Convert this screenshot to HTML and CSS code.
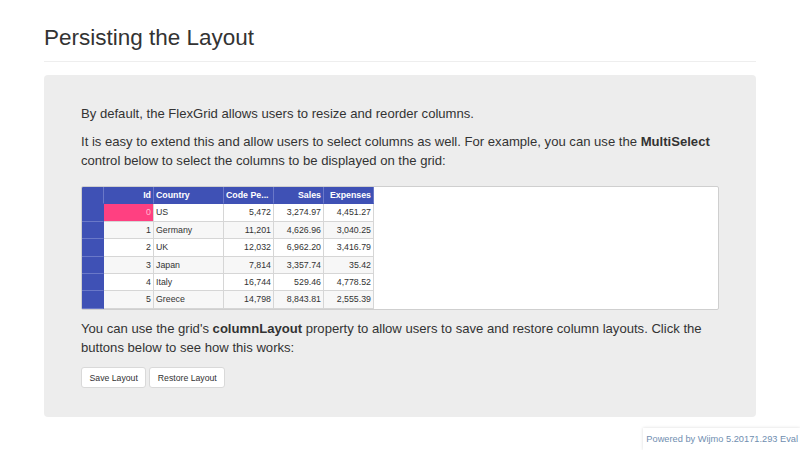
FILE: index.html
```html
<!DOCTYPE html>
<html>
<head>
<meta charset="utf-8">
<link rel="stylesheet" href="styles.css">
</head>
<body>
<div class="container">
  <h1 class="title">Persisting the Layout</h1>
  <div class="well">
    <p class="para">By default, the FlexGrid allows users to resize and reorder columns.</p>
    <p class="para">It is easy to extend this and allow users to select columns as well. For example, you can use the <b>MultiSelect</b> control below to select the columns to be displayed on the grid:</p>
    <div class="grid">
      <div class="row hdr">
        <div class="c rh"></div>
        <div class="c w50 r">Id</div>
        <div class="c w70">Country</div>
        <div class="c w50">Code Pe...</div>
        <div class="c w50 r">Sales</div>
        <div class="c w50 r">Expenses</div>
      </div>
      <div class="row">
        <div class="c rh"></div>
        <div class="c w50 r sel">0</div>
        <div class="c w70">US</div>
        <div class="c w50 r">5,472</div>
        <div class="c w50 r">3,274.97</div>
        <div class="c w50 r">4,451.27</div>
      </div>
      <div class="row alt">
        <div class="c rh"></div>
        <div class="c w50 r">1</div>
        <div class="c w70">Germany</div>
        <div class="c w50 r">11,201</div>
        <div class="c w50 r">4,626.96</div>
        <div class="c w50 r">3,040.25</div>
      </div>
      <div class="row">
        <div class="c rh"></div>
        <div class="c w50 r">2</div>
        <div class="c w70">UK</div>
        <div class="c w50 r">12,032</div>
        <div class="c w50 r">6,962.20</div>
        <div class="c w50 r">3,416.79</div>
      </div>
      <div class="row alt">
        <div class="c rh"></div>
        <div class="c w50 r">3</div>
        <div class="c w70">Japan</div>
        <div class="c w50 r">7,814</div>
        <div class="c w50 r">3,357.74</div>
        <div class="c w50 r">35.42</div>
      </div>
      <div class="row">
        <div class="c rh"></div>
        <div class="c w50 r">4</div>
        <div class="c w70">Italy</div>
        <div class="c w50 r">16,744</div>
        <div class="c w50 r">529.46</div>
        <div class="c w50 r">4,778.52</div>
      </div>
      <div class="row alt">
        <div class="c rh"></div>
        <div class="c w50 r">5</div>
        <div class="c w70">Greece</div>
        <div class="c w50 r">14,798</div>
        <div class="c w50 r">8,843.81</div>
        <div class="c w50 r">2,555.39</div>
      </div>
    </div>
    <p class="para p3">You can use the grid's <b>columnLayout</b> property to allow users to save and restore column layouts. Click the buttons below to see how this works:</p>
    <div class="buttons">
      <button class="btn">Save Layout</button>
      <button class="btn">Restore Layout</button>
    </div>
  </div>
</div>
<div class="powered">Powered by Wijmo 5.20171.293 Eval</div>
</body>
</html>
```

FILE: styles.css
```css
html, body {
  margin: 0;
  padding: 0;
  background: #fff;
  font-family: "Liberation Sans", Arial, sans-serif;
  color: #333;
}
.container {
  margin: 0 44px;
  padding-top: 25px;
}
.title {
  font-size: 22.5px;
  font-weight: 400;
  margin: 0;
  line-height: 25px;
  padding-bottom: 11px;
  border-bottom: 1px solid #eee;
}
.well {
  margin-top: 13px;
  background: #ededed;
  border-radius: 4px;
  padding: 29px 37px 0;
  height: 313px;
}
.para {
  font-size: 13.1px;
  line-height: 19px;
  margin: 0 0 9px;
}
.grid {
  margin-top: 16px;
  border: 1px solid #cfcfcf;
  background: #fff;
  height: 122px;
  border-radius: 2px;
  overflow: hidden;
  display: flex;
  flex-direction: column;
}
.row {
  display: flex;
  height: 17.4px;
  flex: none;
}
.c {
  box-sizing: border-box;
  font-size: 8.8px;
  line-height: 16.4px;
  padding: 0 2px;
  border-right: 1px solid #d6d6d6;
  border-bottom: 1px solid #d6d6d6;
  white-space: nowrap;
  overflow: hidden;
  color: #333;
}
.rh {
  width: 22px;
  background: #3f51b5;
  border-right: 1px solid #3f51b5;
  border-bottom: 1px solid #6a78c8;
}
.w50 { width: 50px; }
.w70 { width: 70px; }
.r { text-align: right; }
.hdr .c {
  background: #3f51b5;
  color: #fff;
  font-weight: 700;
  border-right: 1px solid #6a78c8;
  border-bottom: 1px solid #3f51b5;
}
.alt .c { background: #f7f7f7; }
.row .rh { background: #3f51b5; }
.row .sel { background: #ff4081; color: #ffbcd2; }
.p3 { margin-top: 9px; }
.buttons {
  display: flex;
  gap: 3px;
  margin-top: 10px;
}
.btn {
  font-family: "Liberation Sans", Arial, sans-serif;
  font-size: 8.7px;
  color: #333;
  background: #fff;
  border: 1px solid #d9d9d9;
  border-radius: 3px;
  height: 21px;
  padding: 0 7.5px;
}
.powered {
  position: absolute;
  right: 0;
  top: 428px;
  background: #fff;
  color: #6f8eb0;
  font-size: 9.25px;
  line-height: 12px;
  padding: 5px 2px 5px 3px;
  box-shadow: 0 0 3px rgba(0,0,0,0.15);
}
```
